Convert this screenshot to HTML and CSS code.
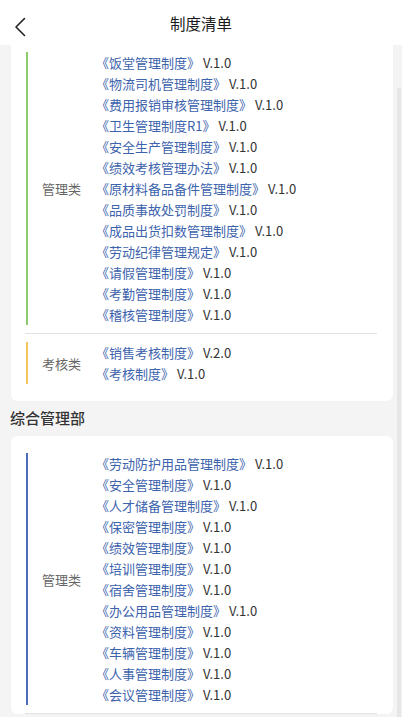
FILE: index.html
```html
<!DOCTYPE html>
<html lang="zh">
<head>
<meta charset="utf-8">
<title>制度清单</title>
<link rel="stylesheet" href="styles.css">
</head>
<body>
<div class="page">
  <header class="topbar">
    <span class="back">
      <svg width="12" height="20" viewBox="0 0 12 20"><path d="M10.5 1.5 L2 10 L10.5 18.5" fill="none" stroke="#222" stroke-width="1.6" stroke-linecap="round" stroke-linejoin="round"/></svg>
    </span>
    <h1 class="title">制度清单</h1>
  </header>
  <main class="content">
    <section class="card card-cut">
      <div class="group green">
        <div class="label">管理类</div>
        <ul class="items">
          <li><span class="name">《饭堂管理制度》</span> <span class="ver">V.1.0</span></li>
          <li><span class="name">《物流司机管理制度》</span> <span class="ver">V.1.0</span></li>
          <li><span class="name">《费用报销审核管理制度》</span> <span class="ver">V.1.0</span></li>
          <li><span class="name">《卫生管理制度R1》</span> <span class="ver">V.1.0</span></li>
          <li><span class="name">《安全生产管理制度》</span> <span class="ver">V.1.0</span></li>
          <li><span class="name">《绩效考核管理办法》</span> <span class="ver">V.1.0</span></li>
          <li><span class="name">《原材料备品备件管理制度》</span> <span class="ver">V.1.0</span></li>
          <li><span class="name">《品质事故处罚制度》</span> <span class="ver">V.1.0</span></li>
          <li><span class="name">《成品出货扣数管理制度》</span> <span class="ver">V.1.0</span></li>
          <li><span class="name">《劳动纪律管理规定》</span> <span class="ver">V.1.0</span></li>
          <li><span class="name">《请假管理制度》</span> <span class="ver">V.1.0</span></li>
          <li><span class="name">《考勤管理制度》</span> <span class="ver">V.1.0</span></li>
          <li><span class="name">《稽核管理制度》</span> <span class="ver">V.1.0</span></li>
        </ul>
      </div>
      <div class="divider"></div>
      <div class="group yellow">
        <div class="label">考核类</div>
        <ul class="items">
          <li><span class="name">《销售考核制度》</span> <span class="ver">V.2.0</span></li>
          <li><span class="name">《考核制度》</span> <span class="ver">V.1.0</span></li>
        </ul>
      </div>
    </section>

    <h2 class="dept">综合管理部</h2>

    <section class="card">
      <div class="group blue">
        <div class="label">管理类</div>
        <ul class="items">
          <li><span class="name">《劳动防护用品管理制度》</span> <span class="ver">V.1.0</span></li>
          <li><span class="name">《安全管理制度》</span> <span class="ver">V.1.0</span></li>
          <li><span class="name">《人才储备管理制度》</span> <span class="ver">V.1.0</span></li>
          <li><span class="name">《保密管理制度》</span> <span class="ver">V.1.0</span></li>
          <li><span class="name">《绩效管理制度》</span> <span class="ver">V.1.0</span></li>
          <li><span class="name">《培训管理制度》</span> <span class="ver">V.1.0</span></li>
          <li><span class="name">《宿舍管理制度》</span> <span class="ver">V.1.0</span></li>
          <li><span class="name">《办公用品管理制度》</span> <span class="ver">V.1.0</span></li>
          <li><span class="name">《资料管理制度》</span> <span class="ver">V.1.0</span></li>
          <li><span class="name">《车辆管理制度》</span> <span class="ver">V.1.0</span></li>
          <li><span class="name">《人事管理制度》</span> <span class="ver">V.1.0</span></li>
          <li><span class="name">《会议管理制度》</span> <span class="ver">V.1.0</span></li>
        </ul>
      </div>
      <div class="divider"></div>
    </section>
  </main>
  <div class="scrollbar"></div>
</div>
</body>
</html>
```

FILE: styles.css
```css
* { box-sizing: border-box; }
html, body {
  margin: 0;
  padding: 0;
  background: #f4f4f5;
  font-family: "Noto Sans CJK SC", "Noto Sans", sans-serif;
}
.page {
  position: relative;
  width: 402px;
  height: 717px;
  overflow: hidden;
  background: #f4f4f5;
}
.topbar {
  height: 45px;
  background: #ffffff;
  display: flex;
  align-items: center;
  justify-content: center;
  position: relative;
}
.back {
  position: absolute;
  left: 14px;
  top: 17px;
  display: flex;
}
.title {
  margin: 0;
  font-size: 15.5px;
  font-weight: 400;
  color: #1a1a1a;
  line-height: 1;
  padding-top: 2px;
}
.content {
  padding: 0 9px 0 11px;
}
.card {
  background: #fff;
  border-radius: 6px;
  padding: 17px 16px 0 14px;
  box-shadow: 0 0 1px rgba(0,0,0,0.04);
}
.card-cut {
  border-top-left-radius: 0;
  border-top-right-radius: 0;
  padding-top: 7px;
  padding-bottom: 17px;
}
.group {
  display: flex;
  align-items: center;
  border-left: 2.5px solid #8ccb6e;
  margin-left: 1px;
}
.group.yellow { border-left-color: #f2c55a; }
.group.blue { border-left-color: #4d6cb8; }
.label {
  width: 68px;
  padding-left: 14px;
  font-size: 13px;
  color: #666;
  flex-shrink: 0;
}
.items {
  list-style: none;
  margin: 0;
  padding: 0;
  font-size: 13px;
  line-height: 21px;
}
.name { color: #3d63ad; }
.ver { color: #333; }
.divider {
  height: 1px;
  background: #e2e2e2;
  margin: 8px 0 8px 0;
}
.dept {
  margin: 0;
  font-size: 15px;
  font-weight: 500;
  color: #333;
  line-height: 35px;
  margin-left: -1px;
  padding-bottom: 1px;
  margin-top: -1px;
}
.scrollbar {
  position: absolute;
  right: 1px;
  top: 88px;
  bottom: 0;
  width: 4px;
  background: #e6e6e7;
}
```
